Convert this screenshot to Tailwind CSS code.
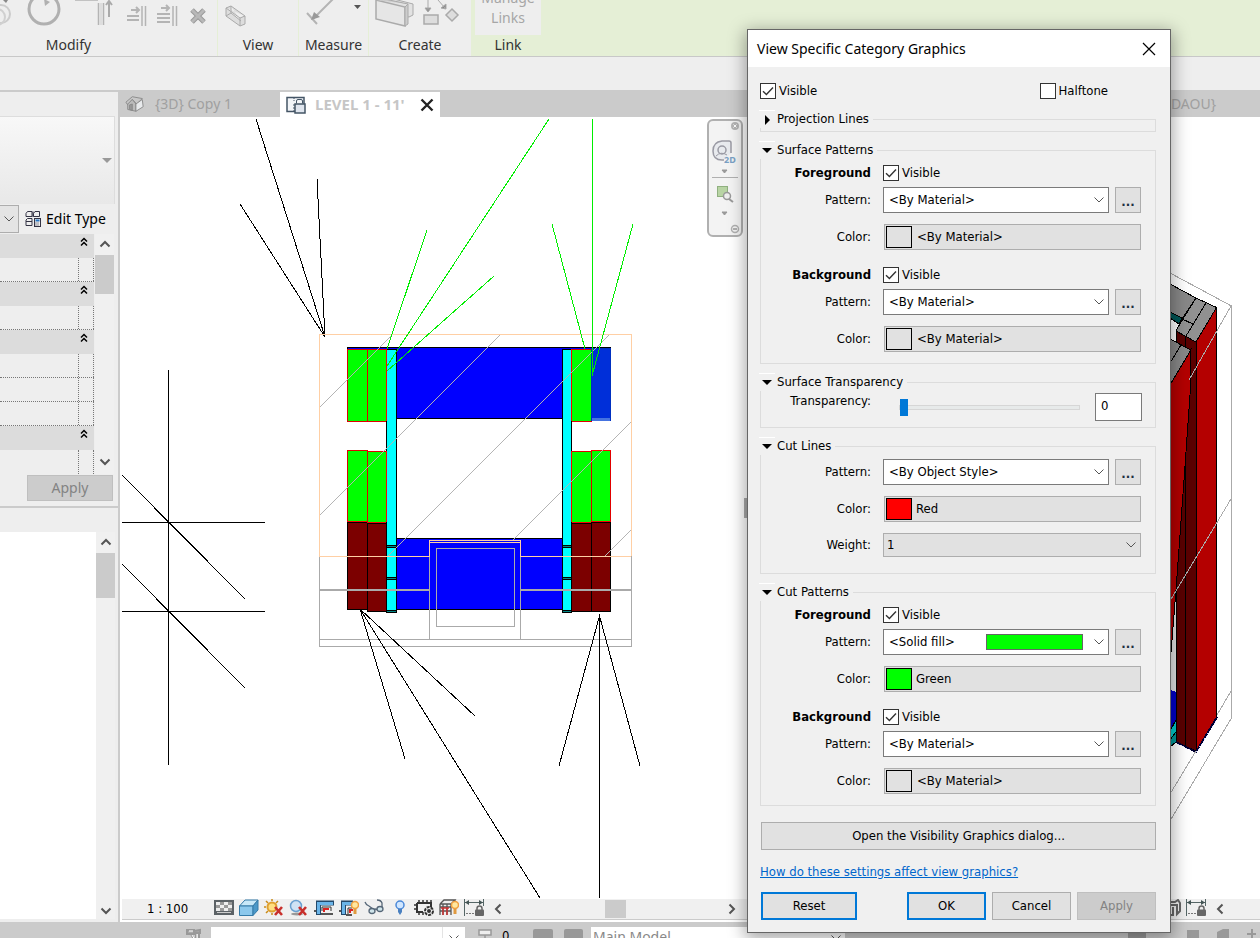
<!DOCTYPE html>
<html lang="en">
  <head>
    <meta charset="utf-8" />
    <title>View Specific Category Graphics</title>
    <script src="https://cdn.jsdelivr.net/npm/@tailwindcss/browser@4"></script>
  </head>
  <body class="bg-[#cbcbcb]">
    <!-- shared icons -->
    <svg class="hidden">
      <symbol id="chev-down" viewBox="0 0 10 6"><path d="M.5 .5L5 5L9.500 .5" fill="none" stroke="#555" stroke-width="1" /></symbol>
      <symbol id="tick" viewBox="0 0 14 14"><path d="M2 7.200L5.400 10.500L12 3.500" fill="none" stroke="#333" stroke-width="1.400" /></symbol>
      <symbol id="scroll-arrow" viewBox="0 0 12 8"><path d="M1.500 6.500L6 2L10.500 6.500" fill="none" stroke="#555" stroke-width="2" /></symbol>
      <symbol id="collapse" viewBox="0 0 8 10"><path d="M1 4.500L4 1.500L7 4.500M1 8.500L4 5.500L7 8.500" fill="none" stroke="#000" stroke-width="1.500" /></symbol>
      <symbol id="lock-dim" viewBox="0 0 20 20">
        <path d="M0 3.500H20M.5 0V17M19.500 0V7" stroke="#566" fill="none" />
        <path d="M1 3.500L5 1V6zM19 3.500L15 1V6z" fill="#455" />
        <path d="M2 14.500H11" stroke="#777" stroke-dasharray="2 1" />
        <path d="M13 11V9.500A2.500 2.500 0 0 1 18 9.500V11" fill="none" stroke="#666" stroke-width="1.500" />
        <rect x="11" y="10.500" width="9" height="6.500" rx="1" fill="#666" />
      </symbol>
    </svg>

    <div class="flex h-screen flex-col overflow-hidden font-['Noto_Sans','Open_Sans',sans-serif] text-sm text-[#333]">
      <!-- ribbon -->
      <header class="flex h-[57px] shrink-0 gap-px border-b border-[#c8c8c8] bg-[#e5efd6] text-center">
        <section class="flex w-[217px] flex-col bg-[#eee]">
          <svg class="h-[35px] w-full" viewBox="0 0 217 35" fill="none" stroke="#b4b4b4">
            <circle cx="1" cy="14" r="9" stroke="#ccc" stroke-width="2" /><circle cx="-3" cy="17" r="8" stroke="#d0d0d0" stroke-width="2" />
            <path d="M3 0L6 3L8 0z" fill="#888" stroke="none" />
            <circle cx="44" cy="9" r="15" stroke="#b0b0b0" stroke-width="3" /><path d="M44 -1L50 2L45 6z" fill="#b0b0b0" stroke="none" />
            <path d="M75 0H98M98.500 3V25M103.500 3V25" stroke-width="1.500" /><path d="M101 3V25" stroke="#ddd" stroke-width="3" />
            <path d="M109 17V2M106 5L109 1L112 5" stroke="#aaa" stroke-width="2" />
            <path d="M131 10H138M136 7L139 10L136 13M127 16H139M127 20H139" stroke-width="2" /><path d="M142 6V26M145.500 6V26" stroke-width="1.500" />
            <path d="M161 8H168M166 5L169 8L166 11M157 14H170M157 18H170M157 22H170" stroke-width="2" /><path d="M173 6V26M176.500 6V26" stroke-width="1.500" />
            <path d="M192 10L204 22M204 10L192 22" stroke="#999" stroke-width="5" /><path d="M192 10L204 22M204 10L192 22" stroke="#b8b8b8" stroke-width="3" />
          </svg>
          <div class="pr-20">Modify</div>
        </section>
        <section class="flex w-20 flex-col bg-[#eee]">
          <svg class="h-[35px] w-full" viewBox="218 0 80 35" fill="#ddd" stroke="#aaa">
            <path d="M226 8L231 6L245 16V24L240 26L226 16zM226 8L240 18L245 16M240 18V26M231 6V13L241 21M226 16L231 13" />
          </svg>
          <div>View</div>
        </section>
        <section class="flex w-[69px] flex-col bg-[#eee]">
          <svg class="h-[35px] w-full" viewBox="299 0 69 35" fill="none" stroke="#b4b4b4">
            <path d="M334 -2L313 19M307 13L317 24" stroke-width="2" /><path d="M311 20L314 12L320 17z" fill="#999" stroke="none" />
            <path d="M354 5H361L357.500 9z" fill="#555" stroke="none" />
          </svg>
          <div>Measure</div>
        </section>
        <section class="flex w-[102px] flex-col bg-[#eee]">
          <svg class="h-[35px] w-full" viewBox="369 0 102 35" fill="#e2e2e2" stroke="#aaa">
            <path d="M382 -4L413 4V15L409 17L382 12z" /><path d="M376 0L405 7V26L376 19z" fill="#e6e6e6" stroke-width="1.500" /><path d="M405 26L408 24V4L405 7zM376 0L380 -2L408 4" fill="#ccc" />
            <path d="M428 0V10M425 8L428 12L431 8z" fill="#888" /><rect x="424" y="15" width="14" height="9" fill="#ddd" stroke-width="1.500" />
            <path d="M438 0L445 8M441 8L446 9L446 4z" fill="#888" /><path d="M452 9L458 15L452 21L446 15z" fill="#ddd" stroke-width="1.500" />
          </svg>
          <div>Create</div>
        </section>
        <section class="ml-[3px] flex w-[66px] flex-col bg-[#eee]">
          <button class="flex h-[35px] flex-col items-center justify-end pb-[7px] leading-5 text-[#a6a6a6]"><span>Manage</span><span>Links</span></button>
          <div class="grow bg-[#e5efd6]">Link</div>
        </section>
      </header>

      <!-- options bar -->
      <div class="h-[33px] shrink-0 bg-[#eee]"></div>

      <main class="flex min-h-0 grow">
        <!-- palettes -->
        <aside class="flex w-[120px] shrink-0 flex-col border-t-2 border-r-2 border-[#cbcbcb] bg-[#eee]">
          <div class="mt-6 mr-[3px] flex h-[88px] items-center justify-end border-t border-r border-[#ddd] bg-linear-to-b from-[#f8f8f8] to-[#e8e8e8] pr-[2px]">
            <svg class="h-[5px] w-[10px]" viewBox="0 0 10 5"><path d="M0 0H10L5 5z" fill="#999" /></svg>
          </div>
          <div class="flex h-[30px] items-center gap-[6px]">
            <button class="flex h-7 w-[19px] items-center justify-center border border-l-0 border-[#adadad] bg-[#e4e4e4]" aria-label="Type list">
              <svg class="h-[6px] w-[10px]"><use href="#chev-down" /></svg>
            </button>
            <button class="flex items-center gap-[5px] whitespace-nowrap text-black">
              <svg class="size-4" viewBox="0 0 16 16" fill="none" stroke="#334">
                <path d="M1 2.500L2.500 .5H7V5.500H1zM8.500 2.500L10 .5H14.500V5.500H8.500zM1 9L2.500 7.500H7V14.500H1zM1 10.500H7M8 .5V6" />
                <rect x="9.500" y="7.500" width="6" height="8" fill="#eee" /><path d="M10.500 9.500H14.500" stroke="#2274c4" stroke-width="2" /><path d="M10.500 12H14.500M10.500 14H14.500" stroke-dasharray="1 1" />
              </svg>
              Edit Type
            </button>
          </div>
          <div class="flex h-60 shrink-0">
            <div class="flex w-[94px] flex-col overflow-hidden *:h-6 *:shrink-0">
              <div class="bg-[#dcdcdc] pt-[3px] pl-20"><svg class="h-[10px] w-2"><use href="#collapse" /></svg></div>
              <div class="border-b border-dotted border-[#777] pl-[78px]"><div class="h-full border-x border-dotted border-[#777]"></div></div>
              <div class="bg-[#dcdcdc] pt-[3px] pl-20"><svg class="h-[10px] w-2"><use href="#collapse" /></svg></div>
              <div class="border-b border-dotted border-[#777] pl-[78px]"><div class="h-full border-x border-dotted border-[#777]"></div></div>
              <div class="bg-[#dcdcdc] pt-[3px] pl-20"><svg class="h-[10px] w-2"><use href="#collapse" /></svg></div>
              <div class="border-b border-dotted border-[#777] pl-[78px]"><div class="h-full border-x border-dotted border-[#777]"></div></div>
              <div class="border-b border-dotted border-[#777] pl-[78px]"><div class="h-full border-x border-dotted border-[#777]"></div></div>
              <div class="border-b border-dotted border-[#777] pl-[78px]"><div class="h-full border-x border-dotted border-[#777]"></div></div>
              <div class="bg-[#dcdcdc] pt-[3px] pl-20"><svg class="h-[10px] w-2"><use href="#collapse" /></svg></div>
              <div class="pl-[78px]"><div class="h-full border-x border-dotted border-[#777]"></div></div>
            </div>
            <div class="ml-px flex w-[19px] flex-col items-center bg-[#f0f0f0]">
              <svg class="my-[6px] h-2 w-3"><use href="#scroll-arrow" /></svg>
              <div class="mt-px h-[39px] w-full bg-[#cbcbcb]"></div>
              <svg class="mt-auto mb-2 h-2 w-3 rotate-180"><use href="#scroll-arrow" /></svg>
            </div>
          </div>
          <button class="mt-px mr-[5px] h-[26px] w-[86px] shrink-0 self-end border border-[#bfbfbf] bg-[#ccc] text-[#838383]" disabled>Apply</button>
          <div class="mt-[5px] h-[26px] shrink-0 border-t-2 border-[#cbcbcb]"></div>
          <div class="mb-[3px] flex grow">
            <div class="grow bg-white"></div>
            <div class="mr-[3px] flex w-[19px] flex-col items-center bg-[#f0f0f0]">
              <svg class="my-[6px] h-2 w-3"><use href="#scroll-arrow" /></svg>
              <div class="mt-px h-[45px] w-full bg-[#cbcbcb]"></div>
              <svg class="mt-auto mb-1 h-2 w-3 rotate-180"><use href="#scroll-arrow" /></svg>
            </div>
          </div>
        </aside>

        <!-- open views -->
        <div class="grid min-w-0 grow grid-cols-[628fr_512fr]">
          <section class="relative flex min-w-0 flex-col bg-white">
            <nav class="flex h-[27px] shrink-0 bg-[#cbcbcb] text-[#a0a0a0]">
              <button class="flex w-40 items-center gap-[10px] pl-[5px]">
                <svg class="size-5" viewBox="0 0 22 22" stroke="#888">
                  <path d="M1 9L8 3L19 5L13 11L12 10L8 6L3 12z" fill="#c8c8c8" /><path d="M3 11L8 6L12 11V19L3 17z" fill="#bbb" /><path d="M12 11L19 6L20 14L12 19z" fill="#e8eaec" /><path d="M5 17V12L8 11V18z" fill="#999" />
                </svg>
                {3D} Copy 1
              </button>
              <div class="flex h-[25px] w-40 items-center self-end bg-white pl-[6px]">
                <svg class="h-[18px] w-5" viewBox="0 0 20 18" fill="#f2f5f8" stroke="#456">
                  <path d="M1 1.500H18V15.500H1z" stroke-width="1.500" /><path d="M8 1V5M8 8V15" stroke-dasharray="2 1" /><path d="M10.500 7.500V5Q10.500 3.500 12 3.500H15Q16.500 3.500 16.500 5V7.500" fill="none" /><path d="M9 8H19V17H9z" fill="#dfe5ee" stroke-width="1.500" />
                </svg>
                <b class="ml-[9px] grow text-left text-[15px] whitespace-nowrap text-[#c6c6c6]">LEVEL 1 - 11'</b>
                <button class="mr-[6px]" aria-label="Close view"><svg class="size-[14px]" viewBox="0 0 14 14"><path d="M1.500 1.500L12.500 12.500M12.500 1.500L1.500 12.500" stroke="#222" stroke-width="2.400" /></svg></button>
              </div>
            </nav>
            <div class="min-h-0 grow overflow-hidden">
              <svg class="h-[782px] w-[628px]" viewBox="120 117 628 782" fill="none" stroke="#000" shape-rendering="crispEdges">
                <!-- elevation marks -->
                <path d="M168.500 370V765M122 522.500H265M122 611.500H265M122 475L245 599M122 564L245 688M256 119L325 337M317 179L325 337M240 204L325 337" />
                <!-- slabs and walls -->
                <rect x="347.500" y="347.500" width="263" height="71" fill="#00f" />
                <rect x="347" y="422" width="40" height="28" fill="#fff" stroke="none" />
                <rect x="571" y="422" width="41" height="28" fill="#fff" stroke="none" />
                <rect x="396.500" y="538.500" width="166" height="71" fill="#00f" />
                <g fill="#0f0" stroke="#e00000">
                  <rect x="347.500" y="349.500" width="20" height="72" /><rect x="367.500" y="349.500" width="19" height="72" />
                  <rect x="571.500" y="349.500" width="20" height="72" />
                  <rect x="347.500" y="450.500" width="20" height="71" /><rect x="367.500" y="451.500" width="19" height="71" />
                  <rect x="571.500" y="451.500" width="20" height="71" /><rect x="591.500" y="450.500" width="19" height="71" />
                </g>
                <rect x="591.500" y="348.500" width="19" height="72" fill="#002fd9" stroke="#0030c0" />
                <rect x="592" y="418" width="18" height="3" fill="#4573e0" stroke="none" />
                <g fill="#7c0000">
                  <rect x="347.500" y="522.500" width="20" height="87" /><rect x="367.500" y="523.500" width="19" height="88" />
                  <rect x="571.500" y="523.500" width="20" height="88" /><rect x="591.500" y="522.500" width="19" height="89" />
                </g>
                <path d="M347 521.500H367M367 522.500H387M571 522.500H591M591 450.500H611M591 521.500H611" stroke="#f00" />
                <rect x="386.500" y="349.500" width="10" height="263" fill="#0ff" /><rect x="562.500" y="349.500" width="9" height="263" fill="#0ff" />
                <path d="M386.500 349V421M386.500 451V522M571.500 349V421M571.500 451V522" stroke="#f00" />
                <path d="M387 545.500H396M387 547.500H396M387 577.500H396M387 579.500H396M387 610.500H396M563 545.500H571M563 547.500H571M563 577.500H571M563 579.500H571M563 610.500H571" />
                <path d="M387 546.500H396M387 578.500H396M387 611.500H396M563 546.500H571M563 578.500H571M563 611.500H571" stroke="#088" />
                <!-- ground and door -->
                <g stroke="#aaa">
                  <path d="M319.500 556V646.500H631.500V556M319 639.500H631M429.500 556V639M520.500 556V639M436.500 548.500H514.500V626.500H436.500z" />
                  <path d="M319 590H429M520 590H631" stroke-width="2" />
                  <path d="M319 408L392 335M320 515L501 334M388 556L610 334M512 541L631 422M605 556L631 530" stroke="#b4b4b4" />
                </g>
                <path d="M319.500 556V334.500H631.500V556M319 556.500H429.500V540.500H520.500V556.500H631M430 542.500H520" stroke="#ffcfa4" />
                <path d="M549 119L387 366M427 230L387 349M494 276L387 371M592.500 119V376M552 224L585 349M633 224L592 376" stroke="#0e0" />
                <!-- section tails -->
                <path d="M360 609L475 716M360 609L405 759M360 609L540 898M599.500 614V898M600 614L559 766M599 614L640 766" />
              </svg>
            </div>
            <footer class="mb-[2px] ml-[2px] flex h-[21px] shrink-0 items-center border-b border-[#cbcbcb] bg-[#f0f0f0]">
              <span class="w-[92px] pl-[25px] font-['DejaVu_Sans_Condensed',sans-serif] text-[13px] text-black">1 : 100</span>
              <div class="flex gap-[5px] *:size-5">
                <svg viewBox="0 0 20 20"><path d="M0 1H20V16H0z" fill="#5c6266" /><path d="M2 3H6V6H2zM10 3H14V6H10zM6 6H10V9H6zM14 6H18V9H14zM2 9H6V12H2zM10 9H14V12H10z" fill="#eee" /><path d="M6 3H10V6H6zM14 3H18V6H14zM2 6H6V9H2zM10 6H14V9H10zM6 9H10V12H6zM14 9H18V12H14z" fill="#999" /><path d="M3 13H17V14H3z" fill="#ccc" /></svg>
                <svg viewBox="0 0 20 20" stroke="#357ba8"><path d="M.5 7L6 1H19L14 7z" fill="#c8e8f8" /><path d="M.5 7H14V16.500H.5z" fill="#8cc8ec" /><path d="M14 7L19 1V11L14 16.500z" fill="#4b98c8" /></svg>
                <svg viewBox="0 0 20 20"><circle cx="8" cy="8" r="4.500" fill="#ffdf80" stroke="#e0a030" stroke-width="2" /><path d="M8 0V2M2 2L4 4M14 2L12 4M0 8H2M2 14L4 12M8 16V14" stroke="#c88a18" stroke-width="1.500" /><path d="M11 8L18 16M18 8L11 16" stroke="#c8302c" stroke-width="2.600" /></svg>
                <svg viewBox="0 0 20 20"><circle cx="7" cy="7" r="5.500" fill="#cfe2f4" stroke="#6aa0d0" stroke-width="1.500" /><ellipse cx="8" cy="15" rx="6" ry="1.500" fill="#999" /><path d="M10 8L17 16M17 8L10 16" stroke="#c8302c" stroke-width="2.600" /></svg>
                <svg viewBox="0 0 20 20" fill="none"><path d="M4.500 16V4H20" stroke="#24496a" stroke-width="5" /><path d="M4.500 15V4.500H19" stroke="#6ab4e8" stroke-width="3" /><path d="M8 12V8H17V12" stroke="#333" /><path d="M10 13V10H15" stroke="#d22" stroke-width="2" /><path d="M0 12H2M7 15H19" stroke="#555" stroke-width="2" /></svg>
                <svg viewBox="0 0 20 20" fill="none"><path d="M4.500 16V4H14" stroke="#24496a" stroke-width="5" /><path d="M4.500 15V4.500H13" stroke="#6ab4e8" stroke-width="3" /><path d="M9 16V9H13" stroke="#333" /><path d="M11 14V11H14" stroke="#d22" stroke-width="2" /><path d="M0 12H2M7 16H13" stroke="#555" stroke-width="2" /><circle cx="16" cy="6" r="3.500" fill="#ffe8a0" stroke="#f0a040" stroke-width="1.500" /><path d="M14.500 10H17.500V15H14.500z" fill="#e09a40" /></svg>
                <svg viewBox="0 0 20 20" fill="#cfe4ea" stroke="#567" stroke-width="1.300"><path d="M1 3Q2 6 5 7L9 10M13 1Q17 1 18 4L18 9M10 11Q12 9 13 11" fill="none" /><ellipse cx="8" cy="12" rx="3" ry="2.500" /><ellipse cx="16" cy="10" rx="3" ry="2.500" /></svg>
                <svg viewBox="0 0 20 20"><circle cx="11" cy="6" r="4" fill="#d0e6ff" stroke="#4a88d8" stroke-width="1.500" /><path d="M9 10H13V13L11 16L9 13z" fill="#4a80c0" /></svg>
                <svg viewBox="0 0 20 20" fill="none" stroke="#333" stroke-width="2"><path d="M3 4V13H9M3 4H17V8" /><path d="M5 1V4M9 1V4M13 1V4M17 1V4M5 13V16M9 13V16M0 6H3M0 10H3" stroke-width="1.500" /><circle cx="15" cy="12" r="4" stroke-dasharray="3 1" /><circle cx="15" cy="12" r="1" /></svg>
                <svg viewBox="0 0 20 20" fill="none" stroke="#555"><path d="M1 5L5 1H16L12 5M1 5H12V16M1 5V16M4 5V16M8 5V16M1 8H12M16 1V4M1 12H12" stroke-width="1.300" /><path d="M4 9V16M8 9V16M2 9H10" stroke="#c33" stroke-width="1.500" /><circle cx="16" cy="6" r="3.500" fill="#ffe8a0" stroke="#f0a040" stroke-width="1.500" /><path d="M14.500 10H17.500V15H14.500z" fill="#e09a40" stroke="none" /></svg>
                <svg><use href="#lock-dim" /></svg>
              </div>
              <svg class="ml-2 h-2 w-3 -rotate-90"><use href="#scroll-arrow" /></svg>
              <div class="flex grow justify-center"><div class="h-[18px] w-[21px] bg-[#cbcbcb]"></div></div>
              <svg class="mr-[10px] h-2 w-3 rotate-90"><use href="#scroll-arrow" /></svg>
            </footer>

            <!-- navigation bar -->
            <div class="absolute top-[29px] right-[5px]">
              <svg class="h-[118px] w-9" viewBox="0 0 36 118" fill="none" stroke="#b0b0b0">
                <rect x="1" y="1" width="34" height="116" rx="5" fill="#f3f3f3" stroke-width="2" />
                <circle cx="28" cy="7" r="4" fill="#b4b4b4" stroke="none" /><path d="M26.500 5.500L29.500 8.500M29.500 5.500L26.500 8.500" stroke="#fff" />
                <path d="M24 34V24Q24 22 22 22H15Q6 23 6 32T15 41H17" fill="#e8eaee" stroke="#9a9aa4" stroke-width="1.500" /><circle cx="15" cy="31" r="4" stroke="#9a9aa4" stroke-width="1.500" /><path d="M9 37Q14 32 20 36" stroke="#9a9aa4" />
                <text x="17" y="44" fill="#7aa0c4" stroke="none" class="font-['Noto_Sans',sans-serif] text-[9px] font-bold">2D</text>
                <path d="M15 51H20L17.500 54zM15 93H20L17.500 96z" fill="#999" stroke="#999" />
                <path d="M5 58.500H31" />
                <rect x="10.500" y="67.500" width="10" height="10" fill="#b8d4a4" stroke="#90b080" /><circle cx="20" cy="77" r="3.500" fill="#eee" stroke="#999" stroke-width="1.500" /><path d="M22 80L26 83" stroke="#999" stroke-width="2" />
                <circle cx="28" cy="110" r="3.500" stroke-width="1.500" /><path d="M26 110H30" stroke-width="2" />
              </svg>
            </div>
            <div class="absolute top-1/2 right-0 mt-[-8px] h-5 w-1 bg-[#aaa]"></div>
          </section>

          <section class="flex min-w-0 flex-col bg-white">
            <nav class="flex h-[27px] shrink-0 items-center justify-end bg-[#cbcbcb] pr-11 text-[#a0a0a0]">DAOU}</nav>
            <div class="flex min-h-0 grow justify-end overflow-hidden">
              <svg class="h-[782px] w-[100px] shrink-0" viewBox="1160 117 100 782" fill="none" stroke="#000" shape-rendering="crispEdges">
                <path d="M1170 600L1176 590V692L1170 690z" fill="#e6e6e6" stroke="none" />
                <path d="M1170 690L1176 692V722L1170 731z" fill="#00c" stroke="none" />
                <path d="M1170 731L1176 720V732L1170 740z" fill="#0cc" /><path d="M1170 740L1176 732V742L1170 747z" fill="#099" />
                <path d="M1170 284L1196 298L1182 319L1170 313z" fill="#888" />
                <path d="M1170 312L1182 318L1179 324L1170 318z" fill="#055" />
                <path d="M1176 331L1196 342V751L1176 742z" fill="#5a0000" /><path d="M1185.500 336V746" />
                <path d="M1196 342L1216.500 307.500V717L1196 751z" fill="#b40000" />
                <path d="M1196 298L1216.500 307.500L1196 342L1176 331L1181 322z" fill="#919191" /><path d="M1206 303L1186 336M1182 319L1193 324" />
                <path d="M1191 350L1190 395L1184 480L1176 590L1170 665V385z" fill="#b40000" />
                <path d="M1170 339L1191 350L1170 385z" fill="#888" /><path d="M1181 345L1170 363" />
                <path d="M1176 742L1196 752L1217 717" stroke="#003" stroke-width="2" /><path d="M1178 744L1196 753L1217 719" stroke="#ccf" stroke-dasharray="1 2" />
                <path d="M1170 273L1231.500 306V718L1170 821M1231 306L1189 380M1231 499L1170 601M1231 691L1217 715M1196 751L1170 794" stroke="#aaa" />
              </svg>
            </div>
            <footer class="mb-[2px] flex h-[21px] shrink-0 items-center justify-end border-b border-[#cbcbcb] bg-[#f0f0f0] pr-[34px]">
              <svg class="size-5" viewBox="0 0 20 20" fill="none" stroke="#666" stroke-width="2"><path d="M2 3H14L17 1L19 4V12L16 15V6H9V16H12V8" /></svg>
              <svg class="ml-[5px] size-5"><use href="#lock-dim" /></svg>
              <svg class="ml-2 h-2 w-3 -rotate-90"><use href="#scroll-arrow" /></svg>
            </footer>
          </section>
        </div>
      </main>

      <!-- status bar -->
      <footer class="flex h-4 shrink-0 overflow-hidden bg-[#cbcbcb] text-[#888]">
        <svg class="mt-[6px] mr-2 ml-[185px] h-3 w-[18px] shrink-0" viewBox="0 0 18 12" fill="#aaa" stroke="#999"><path d="M2 2H9V6H2zM9 3L15 2V5L9 5M6 6L9 11M11 6V12M14 6V12" stroke-width="2" /><path d="M4 3H8M7 7L10 12M12 6V12" stroke="#fff" /></svg>
        <div class="mt-[5px] flex w-[254px] shrink-0 justify-end bg-white"><div class="border-l border-[#e4e4e4] px-[6px] pt-2"><svg class="h-[6px] w-[10px]"><use href="#chev-down" /></svg></div></div>
        <svg class="mt-[7px] ml-[13px] h-[10px] w-[14px] shrink-0" viewBox="0 0 14 10" fill="#eee" stroke="#999" stroke-width="1.500"><path d="M1 1H13V6H1zM7 6V10" /></svg>
        <span class="mt-[5px] ml-[10px] w-4 shrink-0 font-['DejaVu_Sans_Condensed',sans-serif] text-[13px] text-black">0</span>
        <div class="mt-[7px] ml-[15px] h-3 w-5 shrink-0 rounded-t-xs bg-[#999]"></div>
        <div class="mt-[7px] mr-2 ml-[11px] h-3 w-[19px] shrink-0 rounded-t-xs bg-[#999]"></div>
        <div class="mt-[5px] flex w-[254px] shrink-0 justify-between bg-white pr-1 pl-[2px]"><span class="leading-[20px]">Main Model</span><svg class="mt-2 h-[6px] w-[10px]"><use href="#chev-down" /></svg></div>
        <svg class="mt-[5px] mr-1 ml-auto h-3 w-32 shrink-0" viewBox="1128 0 128 12" fill="#999"><path d="M1128 4H1146V12H1128zM1187 3H1199V12H1187zM1217 5L1223 2H1229V12H1217zM1247 6H1256V8H1247zM1251 2H1253V12H1251z" /></svg>
      </footer>
    </div>

    <!-- dialog -->
    <div role="dialog" aria-labelledby="dlg-title" class="absolute top-[29px] left-[747px] w-[424px] border border-[#666] bg-[#f0f0f0] font-['DejaVu_Sans_Condensed','DejaVu_Sans',sans-serif] text-[13px] leading-4 text-black shadow-[0_4px_16px_2px_rgba(0,0,0,0.35)]">
      <div class="flex h-[37px] items-center justify-between bg-white pr-[14px] pl-[9px]">
        <h1 id="dlg-title" class="font-['Noto_Sans','Open_Sans',sans-serif] text-sm">View Specific Category Graphics</h1>
        <button aria-label="Close"><svg class="size-[14px]" viewBox="0 0 14 14"><path d="M1 1L13 13M13 1L1 13" stroke="#000" stroke-width="1.200" /></svg></button>
      </div>

      <form class="flex flex-col pt-4 pr-[14px] pb-3 pl-3">
        <div class="mb-[11px] flex h-4 justify-between pr-[48px]">
          <label class="flex items-center gap-[3px]">
            <span class="relative size-4"><input type="checkbox" checked class="peer block size-4 appearance-none border border-[#333] bg-white" /><svg class="pointer-events-none absolute top-px left-px hidden size-[14px] peer-checked:block"><use href="#tick" /></svg></span>
            Visible
          </label>
          <label class="flex items-center gap-[3px]">
            <span class="relative size-4"><input type="checkbox" class="peer block size-4 appearance-none border border-[#333] bg-white" /><svg class="pointer-events-none absolute top-px left-px hidden size-[14px] peer-checked:block"><use href="#tick" /></svg></span>
            Halftone
          </label>
        </div>

        <div class="flex flex-col gap-[9px]">
          <fieldset class="border border-[#dcdcdc] pb-[3px]">
            <legend class="-ml-[2px]">
              <button type="button" class="flex h-[18px] items-center bg-[#f0f0f0] pr-1">
                <span class="mr-[2px] flex h-[18px] w-4 items-center justify-center border-t border-white"><svg class="h-[10px] w-[5px]" viewBox="0 0 5 10"><path d="M0 0L5 5L0 10z" /></svg></span>
                Projection Lines
              </button>
            </legend>
          </fieldset>

          <fieldset class="border border-[#dcdcdc] pr-[14px] pb-[11px]">
            <legend class="-ml-[2px]">
              <button type="button" class="flex h-[18px] items-center bg-[#f0f0f0] pr-1">
                <span class="mr-[2px] flex h-[18px] w-4 items-center justify-center border-t border-white"><svg class="h-[5px] w-[10px]" viewBox="0 0 10 5"><path d="M0 0H10L5 5z" /></svg></span>
                Surface Patterns
              </button>
            </legend>
            <div class="grid grid-cols-[110px_1fr] items-center gap-x-3 pt-[6px]">
              <b class="text-right">Foreground</b>
              <label class="flex h-4 items-center gap-[3px]">
                <span class="relative size-4"><input type="checkbox" checked class="peer block size-4 appearance-none border border-[#333] bg-white" /><svg class="pointer-events-none absolute top-px left-px hidden size-[14px] peer-checked:block"><use href="#tick" /></svg></span>
                Visible
              </label>
              <label for="sf-pattern" class="mt-[6px] text-right">Pattern:</label>
              <div class="mt-[6px] flex gap-[6px]">
                <div class="relative grow">
                  <select id="sf-pattern" class="block h-[26px] w-full appearance-none border border-[#7a7a7a] bg-white px-[5px]"><option>&lt;By Material&gt;</option></select>
                  <svg class="pointer-events-none absolute top-[10px] right-[5px] h-[6px] w-[10px]"><use href="#chev-down" /></svg>
                </div>
                <button type="button" class="h-[26px] w-[26px] border border-[#adadad] bg-[#e1e1e1] pt-1 font-bold text-[#1c3040]">...</button>
              </div>
              <label for="sf-color" class="mt-[11px] text-right">Color:</label>
              <button type="button" id="sf-color" class="mt-[11px] ml-px flex h-[26px] items-center gap-[5px] border border-[#adadad] bg-[#e1e1e1] pl-px"><span class="h-[22px] w-[26px] border border-black"></span>&lt;By Material&gt;</button>

              <b class="mt-[17px] text-right">Background</b>
              <label class="mt-[17px] flex h-4 items-center gap-[3px]">
                <span class="relative size-4"><input type="checkbox" checked class="peer block size-4 appearance-none border border-[#333] bg-white" /><svg class="pointer-events-none absolute top-px left-px hidden size-[14px] peer-checked:block"><use href="#tick" /></svg></span>
                Visible
              </label>
              <label for="sb-pattern" class="mt-[6px] text-right">Pattern:</label>
              <div class="mt-[6px] flex gap-[6px]">
                <div class="relative grow">
                  <select id="sb-pattern" class="block h-[26px] w-full appearance-none border border-[#7a7a7a] bg-white px-[5px]"><option>&lt;By Material&gt;</option></select>
                  <svg class="pointer-events-none absolute top-[10px] right-[5px] h-[6px] w-[10px]"><use href="#chev-down" /></svg>
                </div>
                <button type="button" class="h-[26px] w-[26px] border border-[#adadad] bg-[#e1e1e1] pt-1 font-bold text-[#1c3040]">...</button>
              </div>
              <label for="sb-color" class="mt-[11px] text-right">Color:</label>
              <button type="button" id="sb-color" class="mt-[11px] ml-px flex h-[26px] items-center gap-[5px] border border-[#adadad] bg-[#e1e1e1] pl-px"><span class="h-[22px] w-[26px] border border-black"></span>&lt;By Material&gt;</button>
            </div>
          </fieldset>

          <fieldset class="border border-[#dcdcdc] pr-[13px] pb-[6px]">
            <legend class="-ml-[2px]">
              <button type="button" class="flex h-[18px] items-center bg-[#f0f0f0] pr-1">
                <span class="mr-[2px] flex h-[18px] w-4 items-center justify-center border-t border-white"><svg class="h-[5px] w-[10px]" viewBox="0 0 10 5"><path d="M0 0H10L5 5z" /></svg></span>
                Surface Transparency
              </button>
            </legend>
            <div class="grid grid-cols-[110px_1fr] gap-x-3 pt-[2px]">
              <label for="transparency" class="text-right">Transparency:</label>
              <div class="flex items-center justify-between pl-4">
                <input id="transparency" type="range" min="0" max="100" value="0" class="h-[18px] w-[181px] appearance-none bg-transparent [&::-webkit-slider-runnable-track]:h-[5px] [&::-webkit-slider-runnable-track]:border [&::-webkit-slider-runnable-track]:border-[#d6d6d6] [&::-webkit-slider-runnable-track]:bg-[#e7eaea] [&::-webkit-slider-thumb]:-mt-[7px] [&::-webkit-slider-thumb]:h-[17px] [&::-webkit-slider-thumb]:w-2 [&::-webkit-slider-thumb]:appearance-none [&::-webkit-slider-thumb]:bg-[#0078d7]" />
                <input type="text" value="0" aria-label="Transparency value" class="h-7 w-[47px] border border-[#7a7a7a] bg-white px-[5px] pb-1" />
              </div>
            </div>
          </fieldset>

          <fieldset class="border border-[#dcdcdc] pr-[14px] pb-4">
            <legend class="-ml-[2px]">
              <button type="button" class="flex h-[18px] items-center bg-[#f0f0f0] pr-1">
                <span class="mr-[2px] flex h-[18px] w-4 items-center justify-center border-t border-white"><svg class="h-[5px] w-[10px]" viewBox="0 0 10 5"><path d="M0 0H10L5 5z" /></svg></span>
                Cut Lines
              </button>
            </legend>
            <div class="grid grid-cols-[110px_1fr] items-center gap-x-3 gap-y-[11px] pt-1">
              <label for="cl-pattern" class="text-right">Pattern:</label>
              <div class="flex gap-[6px]">
                <div class="relative grow">
                  <select id="cl-pattern" class="block h-[26px] w-full appearance-none border border-[#7a7a7a] bg-white px-[5px]"><option>&lt;By Object Style&gt;</option></select>
                  <svg class="pointer-events-none absolute top-[10px] right-[5px] h-[6px] w-[10px]"><use href="#chev-down" /></svg>
                </div>
                <button type="button" class="h-[26px] w-[26px] border border-[#adadad] bg-[#e1e1e1] pt-1 font-bold text-[#1c3040]">...</button>
              </div>
              <label for="cl-color" class="text-right">Color:</label>
              <button type="button" id="cl-color" class="ml-px flex h-[26px] items-center gap-1 border border-[#adadad] bg-[#e1e1e1] pl-px"><span class="h-[22px] w-[26px] border border-black bg-[#f00]"></span>Red</button>
              <label for="cl-weight" class="text-right">Weight:</label>
              <div class="relative">
                <select id="cl-weight" class="block h-6 w-full appearance-none border border-[#adadad] bg-[#e1e1e1] px-[3px]"><option>1</option></select>
                <svg class="pointer-events-none absolute top-[9px] right-[5px] h-[6px] w-[10px]"><use href="#chev-down" /></svg>
              </div>
            </div>
          </fieldset>

          <fieldset class="border border-[#dcdcdc] pr-[14px] pb-[11px]">
            <legend class="-ml-[2px]">
              <button type="button" class="flex h-[18px] items-center bg-[#f0f0f0] pr-1">
                <span class="mr-[2px] flex h-[18px] w-4 items-center justify-center border-t border-white"><svg class="h-[5px] w-[10px]" viewBox="0 0 10 5"><path d="M0 0H10L5 5z" /></svg></span>
                Cut Patterns
              </button>
            </legend>
            <div class="grid grid-cols-[110px_1fr] items-center gap-x-3 pt-[6px]">
              <b class="text-right">Foreground</b>
              <label class="flex h-4 items-center gap-[3px]">
                <span class="relative size-4"><input type="checkbox" checked class="peer block size-4 appearance-none border border-[#333] bg-white" /><svg class="pointer-events-none absolute top-px left-px hidden size-[14px] peer-checked:block"><use href="#tick" /></svg></span>
                Visible
              </label>
              <label for="cf-pattern" class="mt-[6px] text-right">Pattern:</label>
              <div class="mt-[6px] flex gap-[6px]">
                <div class="relative grow">
                  <select id="cf-pattern" class="block h-[26px] w-full appearance-none border border-[#7a7a7a] bg-white px-[5px]"><option>&lt;Solid fill&gt;</option></select>
                  <div class="pointer-events-none absolute top-[5px] right-[26px] h-4 w-[97px] border border-[#666] bg-[#0f0]"></div>
                  <svg class="pointer-events-none absolute top-[10px] right-[5px] h-[6px] w-[10px]"><use href="#chev-down" /></svg>
                </div>
                <button type="button" class="h-[26px] w-[26px] border border-[#adadad] bg-[#e1e1e1] pt-1 font-bold text-[#1c3040]">...</button>
              </div>
              <label for="cf-color" class="mt-[11px] text-right">Color:</label>
              <button type="button" id="cf-color" class="mt-[11px] ml-px flex h-[26px] items-center gap-1 border border-[#adadad] bg-[#e1e1e1] pl-px"><span class="h-[22px] w-[26px] border border-black bg-[#0f0]"></span>Green</button>

              <b class="mt-[17px] text-right">Background</b>
              <label class="mt-[17px] flex h-4 items-center gap-[3px]">
                <span class="relative size-4"><input type="checkbox" checked class="peer block size-4 appearance-none border border-[#333] bg-white" /><svg class="pointer-events-none absolute top-px left-px hidden size-[14px] peer-checked:block"><use href="#tick" /></svg></span>
                Visible
              </label>
              <label for="cb-pattern" class="mt-[6px] text-right">Pattern:</label>
              <div class="mt-[6px] flex gap-[6px]">
                <div class="relative grow">
                  <select id="cb-pattern" class="block h-[26px] w-full appearance-none border border-[#7a7a7a] bg-white px-[5px]"><option>&lt;By Material&gt;</option></select>
                  <svg class="pointer-events-none absolute top-[10px] right-[5px] h-[6px] w-[10px]"><use href="#chev-down" /></svg>
                </div>
                <button type="button" class="h-[26px] w-[26px] border border-[#adadad] bg-[#e1e1e1] pt-1 font-bold text-[#1c3040]">...</button>
              </div>
              <label for="cb-color" class="mt-[11px] text-right">Color:</label>
              <button type="button" id="cb-color" class="mt-[11px] ml-px flex h-[26px] items-center gap-[5px] border border-[#adadad] bg-[#e1e1e1] pl-px"><span class="h-[22px] w-[26px] border border-black"></span>&lt;By Material&gt;</button>
            </div>
          </fieldset>
        </div>

        <button type="button" class="mt-4 ml-px h-7 border border-[#adadad] bg-[#e1e1e1]">Open the Visibility Graphics dialog...</button>
        <a href="#" class="mt-[14px] mb-3 self-start text-[#0066cc] underline">How do these settings affect view graphics?</a>
        <div class="ml-px flex gap-[6px]">
          <button type="button" class="mr-auto h-7 w-24 border-2 border-[#0078d7] bg-[#e1e1e1]">Reset</button>
          <button type="button" class="h-7 w-[79px] border-2 border-[#0078d7] bg-[#e1e1e1]">OK</button>
          <button type="button" class="h-7 w-[79px] border border-[#adadad] bg-[#e1e1e1]">Cancel</button>
          <button type="button" class="h-7 w-[79px] border border-[#bfbfbf] bg-[#ccc] text-[#838383]" disabled>Apply</button>
        </div>
      </form>
    </div>
  </body>
</html>
